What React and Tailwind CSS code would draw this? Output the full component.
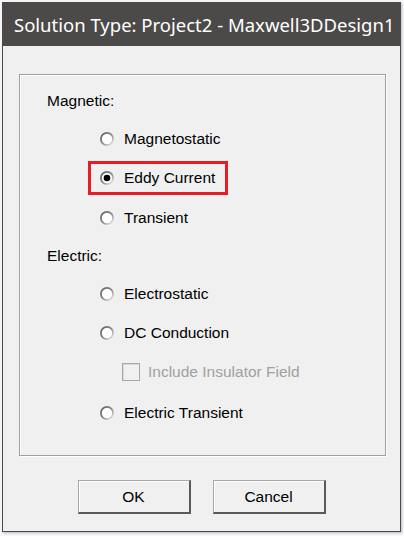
import React from "react";

const uiFont = { fontFamily: '"Liberation Sans", Arial, sans-serif' };

function Radio({ checked }) {
  return (
    <svg width="14" height="14" viewBox="0 0 14 14" className="shrink-0">
      <defs>
        <linearGradient id="rg" x1="0" y1="0" x2="1" y2="1">
          <stop offset="0" stopColor="#5e5e5e" />
          <stop offset="0.55" stopColor="#8e8e8e" />
          <stop offset="1" stopColor="#f4f4f4" />
        </linearGradient>
      </defs>
      <circle cx="7" cy="7" r="6.1" fill="#ffffff" stroke="url(#rg)" strokeWidth="1.8" />
      {checked && <circle cx="7" cy="7" r="3.3" fill="#000000" />}
    </svg>
  );
}

function Option({ label, checked, h }) {
  return (
    <div className={`flex items-center pl-[80px] ${h}`}>
      <Radio checked={checked} />
      <span className="ml-[10px] text-[15.5px] text-black">{label}</span>
    </div>
  );
}

export default function App() {
  return (
    <div className="w-[404px] h-[536px] bg-[#f6f6f8] pl-[2px] pt-[2px] overflow-hidden" style={uiFont}>
      <div className="w-[399px] h-[530px] border border-[#4b4a48] bg-[#f0f0f0] shadow-[1px_1px_2px_rgba(0,0,0,0.25)] flex flex-col">
        <div
          className="h-[43px] bg-[#4b4a48] text-white text-[18.5px] pl-[11px] flex items-center shrink-0"
          style={{ fontFamily: '"Noto Sans", "Open Sans", sans-serif' }}
        >
          Solution Type: Project2 - Maxwell3DDesign1
        </div>

        <div className="ml-[16px] mt-[28px] w-[367px] h-[382px] border border-[#a0a0a0] shadow-[inset_1px_1px_0_#ffffff,1px_1px_0_#ffffff] pt-[7px]">
          <div className="h-[37px] flex items-center pl-[27px] text-[15.5px] text-black">Magnetic:</div>
          <Option label="Magnetostatic" h="h-[39px]" />
          <div className="h-[40px] flex items-center pl-[68px]">
            <div className="w-[140px] h-[34px] border-[3px] border-[#e81c24] flex items-center pl-[9px]">
              <Radio checked />
              <span className="ml-[10px] text-[15.5px] text-black">Eddy Current</span>
            </div>
          </div>
          <Option label="Transient" h="h-[39px]" />
          <div className="h-[38px] flex items-center pl-[27px] text-[15.5px] text-black">Electric:</div>
          <Option label="Electrostatic" h="h-[38px]" />
          <Option label="DC Conduction" h="h-[39px]" />
          <div className="h-[40px] flex items-center pl-[102px]">
            <div className="w-[18px] h-[18px] border border-[#a8a8a8] bg-[#f0f0f0] shadow-[inset_1px_1px_0_#d8d8d8]" />
            <span className="ml-[8px] text-[15.5px] text-[#a0a0a0]">Include Insulator Field</span>
          </div>
          <Option label="Electric Transient" h="h-[42px]" />
        </div>

        <div className="flex justify-center gap-[22px] mt-[24px]">
          {["OK", "Cancel"].map((t) => (
            <button
              key={t}
              className="w-[113px] h-[34px] border border-t-[#a8a8a8] border-l-[#a8a8a8] border-b-2 border-r-2 border-b-[#5a5a5a] border-r-[#5a5a5a] bg-[#f0f0f0] shadow-[inset_1px_1px_0_#ffffff] text-[15.5px] text-black flex items-center justify-center"
            >
              {t}
            </button>
          ))}
        </div>
      </div>
    </div>
  );
}
